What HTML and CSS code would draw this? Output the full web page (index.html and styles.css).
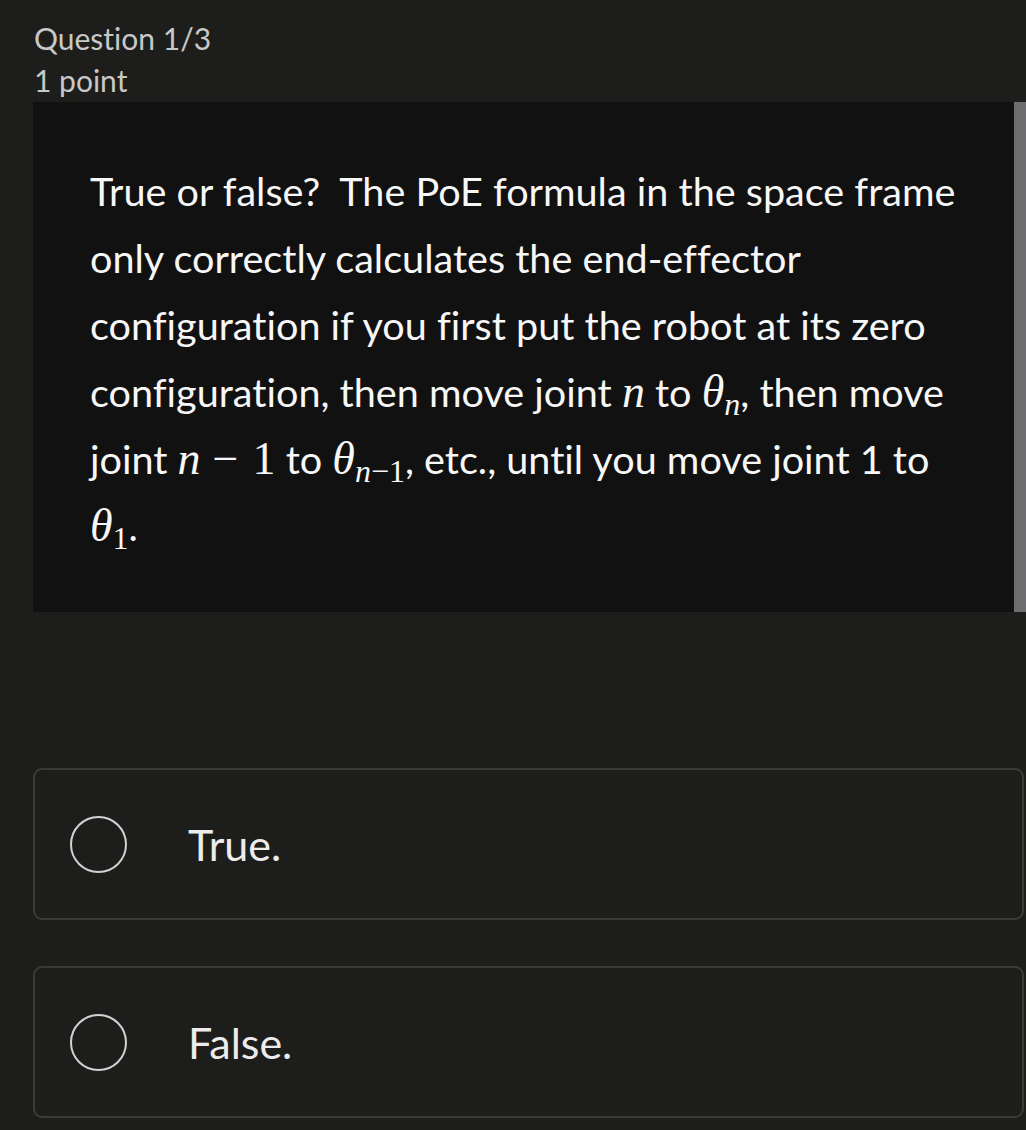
FILE: index.html
```html
<!DOCTYPE html>
<html lang="en">
<head>
<meta charset="utf-8">
<title>Question 1/3</title>
<link rel="stylesheet" href="styles.css">
</head>
<body>
<main class="quiz">
  <header class="q-head">
    <div class="q-num">Question 1/3</div>
    <div class="q-points">1 point</div>
  </header>

  <section class="prompt-wrap">
    <div class="prompt">
      <p>True or false?&nbsp; The PoE formula in the space frame only correctly calculates the end-effector configuration if you first put the robot at its zero configuration, then move joint <span class="mi">n</span> to <span class="mi">θ</span><sub class="sub"><span class="mi">n</span></sub>, then move joint <span class="mi">n</span><span class="mo">−</span><span class="mn">1</span> to <span class="mi">θ</span><sub class="sub"><span class="mi">n</span><span class="mo-s">−</span><span class="mn">1</span></sub>, etc., until you move joint 1 to <span class="mi">θ</span><sub class="sub"><span class="mn">1</span></sub>.</p>
    </div>
    <div class="scroll-thumb"></div>
  </section>

  <div class="options">
    <label class="option">
      <span class="radio"></span>
      <span class="opt-text">True.</span>
    </label>
    <label class="option">
      <span class="radio"></span>
      <span class="opt-text">False.</span>
    </label>
  </div>
</main>
</body>
</html>
```

FILE: styles.css
```css
html, body {
  margin: 0;
  padding: 0;
  background: #1d1e1c;
}

body {
  font-family: "Lato", "Open Sans", sans-serif;
  color: #f2f2f2;
  font-variant-ligatures: none;
}

.quiz {
  width: 1026px;
  padding: 17px 2px 0 33px;
  box-sizing: border-box;
}

.q-head {
  color: #c8c8c8;
  font-size: 30px;
  line-height: 42px;
  padding-left: 1px;
}

.prompt-wrap {
  display: flex;
  margin-top: 1px;
  margin-right: -2px;
  height: 510px;
}

.prompt {
  flex: 1;
  background: #111111;
  padding: 55px 30px 0 57px;
  box-sizing: border-box;
}

.prompt p {
  margin: 0;
  font-size: 39.6px;
  line-height: 67px;
  color: #f7f7f7;
}

.scroll-thumb {
  width: 12px;
  background: #6e6e71;
}

.mi {
  font-family: "Liberation Serif", "Times New Roman", serif;
  font-style: italic;
  font-size: 46px;
}

.mn {
  font-family: "Liberation Serif", "Times New Roman", serif;
  font-size: 46px;
}

.mo {
  font-family: "Liberation Serif", "Times New Roman", serif;
  font-size: 46px;
  padding: 0 14px 0 12px;
}

.mo-s {
  font-family: "Liberation Serif", "Times New Roman", serif;
}

.sub {
  line-height: 0;
  vertical-align: -8px;
}

.sub .mi, .sub .mn, .sub .mo-s {
  font-size: 32px;
}

.options {
  margin-top: 156px;
  display: flex;
  flex-direction: column;
  gap: 46px;
}

.option {
  display: flex;
  align-items: center;
  height: 152px;
  box-sizing: border-box;
  border: 2px solid #3a3b39;
  border-radius: 9px;
  padding-left: 35px;
}

.radio {
  width: 53px;
  height: 53px;
  border: 2.5px solid #d2d2d2;
  border-radius: 50%;
  flex: none;
}

.opt-text {
  margin-left: 61px;
  font-size: 43px;
  color: #ececec;
}
```
